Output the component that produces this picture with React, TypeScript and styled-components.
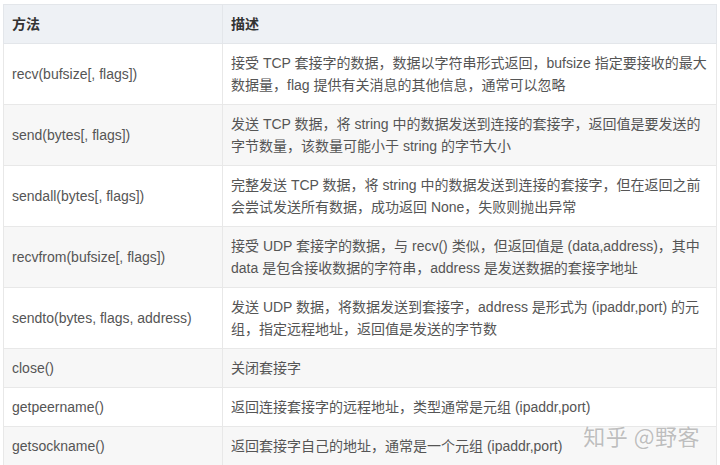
import React from 'react';
import styled, { createGlobalStyle } from 'styled-components';

interface Method {
  name: string;
  desc: string[];
}

const methods: Method[] = [
  {
    name: 'recv(bufsize[, flags])',
    desc: [
      '接受 TCP 套接字的数据，数据以字符串形式返回，bufsize 指定要接收的最大',
      '数据量，flag 提供有关消息的其他信息，通常可以忽略'
    ]
  },
  {
    name: 'send(bytes[, flags])',
    desc: [
      '发送 TCP 数据，将 string 中的数据发送到连接的套接字，返回值是要发送的',
      '字节数量，该数量可能小于 string 的字节大小'
    ]
  },
  {
    name: 'sendall(bytes[, flags])',
    desc: [
      '完整发送 TCP 数据，将 string 中的数据发送到连接的套接字，但在返回之前',
      '会尝试发送所有数据，成功返回 None，失败则抛出异常'
    ]
  },
  {
    name: 'recvfrom(bufsize[, flags])',
    desc: [
      '接受 UDP 套接字的数据，与 recv() 类似，但返回值是 (data,address)，其中',
      'data 是包含接收数据的字符串，address 是发送数据的套接字地址'
    ]
  },
  {
    name: 'sendto(bytes, flags, address)',
    desc: [
      '发送 UDP 数据，将数据发送到套接字，address 是形式为 (ipaddr,port) 的元',
      '组，指定远程地址，返回值是发送的字节数'
    ]
  },
  { name: 'close()', desc: ['关闭套接字'] },
  {
    name: 'getpeername()',
    desc: ['返回连接套接字的远程地址，类型通常是元组 (ipaddr,port)']
  },
  {
    name: 'getsockname()',
    desc: ['返回套接字自己的地址，通常是一个元组 (ipaddr,port)']
  }
];

const GlobalStyle = createGlobalStyle`
  html, body {
    margin: 0;
    padding: 0;
    background: #ffffff;
  }
  body {
    font-family: "Liberation Sans", "Noto Sans CJK SC", Arial, sans-serif;
  }
`;

const Page = styled.div`
  position: relative;
  width: 720px;
  height: 465px;
  overflow: hidden;
  padding: 4px 3px 0 3px;
  box-sizing: border-box;
`;

const Table = styled.table`
  width: 714px;
  border-collapse: collapse;
  table-layout: fixed;
  font-size: 14px;
  line-height: 22px;
  color: #555555;
`;

const HeadCell = styled.th`
  text-align: left;
  font-weight: bold;
  color: #333333;
  background: #eef1f5;
  padding: 8px;
  border: 1px solid #e3e6ea;
`;

const Row = styled.tr<{ $alt: boolean }>`
  background: ${props => (props.$alt ? '#f7f7f7' : '#ffffff')};
`;

const Cell = styled.td`
  padding: 8px;
  border: 1px solid #e8e8e8;
  vertical-align: middle;
  white-space: nowrap;
`;

const Line = styled.div`
  white-space: nowrap;
`;

const Watermark = styled.div`
  position: absolute;
  right: 20px;
  bottom: 17px;
  font-family: "Noto Sans CJK SC", sans-serif;
  font-size: 22px;
  line-height: 26px;
  color: rgba(170, 170, 170, 0.75);
  text-shadow: 0 0 2px rgba(255, 255, 255, 0.9);
  letter-spacing: 0.5px;
`;

export default function App() {
  return (
    <Page>
      <GlobalStyle />
      <Table>
        <colgroup>
          <col style={{ width: 219 }} />
          <col />
        </colgroup>
        <thead>
          <tr>
            <HeadCell>方法</HeadCell>
            <HeadCell>描述</HeadCell>
          </tr>
        </thead>
        <tbody>
          {methods.map((m, i) => (
            <Row key={m.name} $alt={i % 2 === 1}>
              <Cell>{m.name}</Cell>
              <Cell>
                {m.desc.map(line => (
                  <Line key={line}>{line}</Line>
                ))}
              </Cell>
            </Row>
          ))}
        </tbody>
      </Table>
      <Watermark>知乎 @野客</Watermark>
    </Page>
  );
}
